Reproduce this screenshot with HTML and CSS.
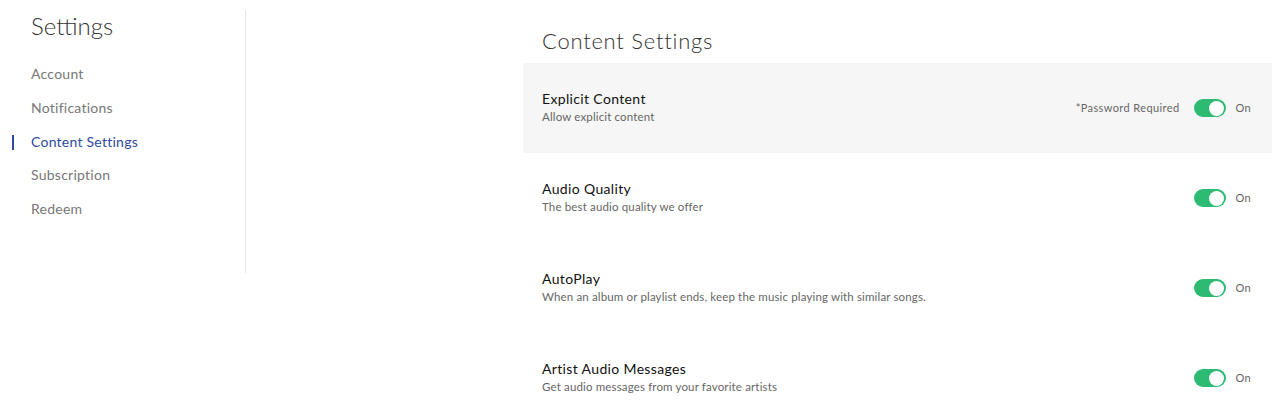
FILE: index.html
```html
<!DOCTYPE html>
<html lang="en">
<head>
<meta charset="utf-8">
<title>Settings</title>
<link rel="stylesheet" href="styles.css">
</head>
<body>
<div class="page">
  <aside class="sidebar">
    <h1 class="sidebar-title">Settings</h1>
    <nav class="nav">
      <a class="nav-item">Account</a>
      <a class="nav-item">Notifications</a>
      <a class="nav-item active">Content Settings</a>
      <a class="nav-item">Subscription</a>
      <a class="nav-item">Redeem</a>
    </nav>
  </aside>
  <main class="main">
    <h2 class="main-title">Content Settings</h2>
    <div class="row highlighted">
      <div class="row-text">
        <div class="row-title">Explicit Content</div>
        <div class="row-sub">Allow explicit content</div>
      </div>
      <div class="row-ctrl">
        <span class="note">*Password Required</span>
        <span class="toggle"><span class="knob"></span></span>
        <span class="state">On</span>
      </div>
    </div>
    <div class="row">
      <div class="row-text">
        <div class="row-title">Audio Quality</div>
        <div class="row-sub">The best audio quality we offer</div>
      </div>
      <div class="row-ctrl">
        <span class="toggle"><span class="knob"></span></span>
        <span class="state">On</span>
      </div>
    </div>
    <div class="row">
      <div class="row-text">
        <div class="row-title">AutoPlay</div>
        <div class="row-sub">When an album or playlist ends, keep the music playing with similar songs.</div>
      </div>
      <div class="row-ctrl">
        <span class="toggle"><span class="knob"></span></span>
        <span class="state">On</span>
      </div>
    </div>
    <div class="row">
      <div class="row-text">
        <div class="row-title">Artist Audio Messages</div>
        <div class="row-sub">Get audio messages from your favorite artists</div>
      </div>
      <div class="row-ctrl">
        <span class="toggle"><span class="knob"></span></span>
        <span class="state">On</span>
      </div>
    </div>
  </main>
</div>
</body>
</html>
```

FILE: styles.css
```css
* { box-sizing: border-box; }
html, body { margin: 0; padding: 0; background: #fff; }
body {
  font-family: "Lato", "Noto Sans", sans-serif;
  color: #222;
  overflow: hidden;
  height: 418px;
}
.page {
  display: flex;
  align-items: flex-start;
}
.sidebar {
  width: 246px;
  flex: none;
  margin-top: 10px;
  height: 263px;
  border-right: 1px solid #e6e6e6;
  padding-left: 31px;
}
.sidebar-title {
  margin: 0;
  font-size: 24px;
  font-weight: 300;
  color: #333;
  line-height: 32px;
  height: 48px;
}
.nav {
  display: flex;
  flex-direction: column;
}
.nav-item {
  position: relative;
  font-size: 14px;
  letter-spacing: 0.25px;
  color: #777;
  line-height: 20px;
  height: 33.8px;
  padding-top: 6px;
}
.nav-item.active { color: #2e4aa0; }
.nav-item.active::before {
  content: "";
  position: absolute;
  left: -19px;
  top: 9px;
  width: 2px;
  height: 15px;
  background: #2e4aa0;
}
.main {
  margin-left: auto;
  margin-right: 9px;
  width: 749px;
  flex: none;
}
.main-title {
  margin: 0;
  padding: 26px 0 0 19px;
  height: 63px;
  font-size: 22px;
  font-weight: 300;
  letter-spacing: 0.75px;
  color: #333;
  line-height: 30px;
}
.row {
  height: 90px;
  display: flex;
  align-items: flex-start;
  justify-content: space-between;
  padding: 27px 0 0 19px;
}
.row.highlighted { background: #f6f6f6; }
.row-title {
  font-size: 14px;
  letter-spacing: 0.35px;
  color: #111;
  line-height: 18px;
}
.row-sub {
  font-size: 11.5px;
  letter-spacing: 0.15px;
  color: #666;
  line-height: 18px;
}
.row-ctrl {
  display: flex;
  align-items: center;
  height: 18px;
  margin-top: 9px;
  padding-right: 21px;
}
.note {
  font-size: 11px;
  letter-spacing: 0.4px;
  color: #666;
  margin-right: 14px;
  margin-bottom: 2px;
}
.toggle {
  width: 32px;
  height: 18px;
  border-radius: 9px;
  background: #2dbb74;
  position: relative;
  display: inline-block;
}
.knob {
  position: absolute;
  right: 1.5px;
  top: 1.5px;
  width: 15px;
  height: 15px;
  border-radius: 50%;
  background: #fff;
}
.state {
  font-size: 11px;
  letter-spacing: 0.3px;
  color: #666;
  margin-left: 10px;
  margin-bottom: 2px;
}
```
